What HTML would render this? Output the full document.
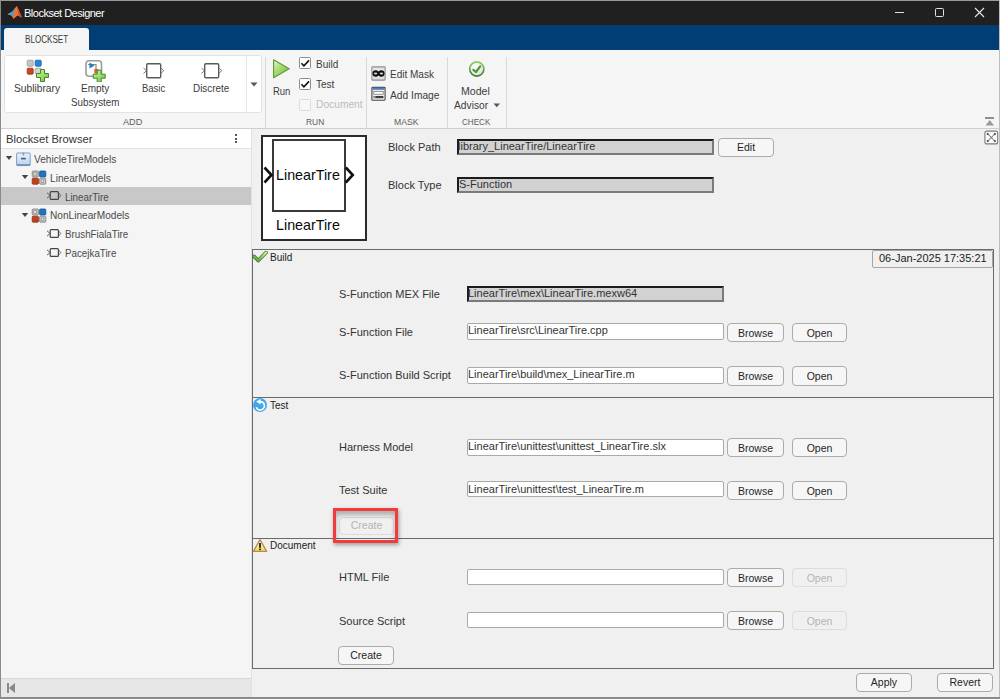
<!DOCTYPE html>
<html><head><meta charset="utf-8">
<style>
*{box-sizing:border-box;margin:0;padding:0}
html,body{width:1000px;height:699px;overflow:hidden;background:#f0f0f0;font-family:"Liberation Sans",sans-serif;}
.a{position:absolute}
.t{position:absolute;white-space:nowrap;color:#333;}
.ft{color:#3a3a3a}
.fld{position:absolute;background:#fff;border:1px solid #a9a9a9;border-radius:2px;}
.dfld{position:absolute;background:#d2d2d2;border-style:solid;border-width:2px;border-color:#1c1c1c #7a7a7a #7a7a7a #1c1c1c;}
.btn{position:absolute;background:#f6f6f6;border:1px solid #ababab;border-radius:4px;color:#262626;font-size:10.5px;text-align:center;}
.btn.dis{color:#b4b4b4;border-color:#dcdcdc;background:#f0f0f0}
.ts{position:absolute;white-space:nowrap;color:#3c3c3c;transform-origin:0 0;}
.vsep{position:absolute;width:1px;background:#d9d9d9;top:57px;height:71px}
</style></head>
<body>
<!-- title bar -->
<div class="a" style="left:0;top:0;width:1000px;height:25px;background:#202020"></div>
<svg class="a" style="left:6px;top:5px" width="17" height="15" viewBox="0 0 17 15">
  <path d="M1.5 9.2 L6.2 6.8 L9.5 2.5 L11 1 L14.5 9 L16 12.5 L11.5 10.5 L7.5 14 L5.5 10.5 Z" fill="#e8762c"/>
  <path d="M1.5 9.2 L6.2 6.8 L9.5 2.5 L7 10.5 L5.5 10.5 Z" fill="#3fa2dc"/>
  <path d="M11 1 L14.5 9 L16 12.5 L12.5 10 Z" fill="#d4442a"/>
</svg>
<div class="t" style="left:24px;top:8px;font-size:11px;line-height:11px;color:#fff;letter-spacing:-0.5px">Blockset Designer</div>
<div class="a" style="left:895px;top:12px;width:9px;height:1px;background:#e0e0e0"></div>
<div class="a" style="left:935px;top:8px;width:9px;height:9px;border:1px solid #e0e0e0;border-radius:1.5px"></div>
<svg class="a" style="left:974px;top:7px" width="11" height="11" viewBox="0 0 11 11"><path d="M1 1 L10 10 M10 1 L1 10" stroke="#e6e6e6" stroke-width="1.1"/></svg>

<!-- blue band -->
<div class="a" style="left:0;top:25px;width:1000px;height:25px;background:#003e74"></div>
<div class="a" style="left:4px;top:28px;width:85px;height:22px;background:#f5f5f5;border-radius:3px 3px 0 0"></div>
<div class="ts" style="left:25px;top:34px;font-size:10.5px;line-height:10px;color:#3a3a3a;transform:scaleX(0.77)">BLOCKSET</div>

<!-- toolstrip -->
<div class="a" style="left:0;top:50px;width:1000px;height:78px;background:#f5f5f5"></div>
<div class="a" style="left:4px;top:55px;width:258px;height:58px;background:#fff;border:1px solid #e3e3e3;border-radius:3px"></div>
<div class="a" style="left:246px;top:56px;width:1px;height:56px;background:#e6e6e6"></div>
<svg class="a" style="left:250px;top:82px" width="8" height="5"><path d="M0.5 0.5 L7.5 0.5 L4 4.5 Z" fill="#555"/></svg>

<div class="vsep" style="left:265px"></div>
<div class="vsep" style="left:366px"></div>
<div class="vsep" style="left:447px"></div>
<div class="vsep" style="left:506px"></div>
<div class="a" style="left:0;top:128px;width:1000px;height:1px;background:#cfcfcf"></div>

<!-- gallery items -->
<svg class="a" style="left:26px;top:59px" width="24" height="23" viewBox="0 0 24 23">
  <defs><linearGradient id="gp" x1="0" y1="0" x2="1" y2="1"><stop offset="0" stop-color="#d6f5a8"/><stop offset="1" stop-color="#6fc13a"/></linearGradient></defs>
  <rect x="1.2" y="1.2" width="6" height="6" rx="1" fill="#c4c4c4" stroke="#9a9a9a" stroke-width="0.8"/>
  <rect x="9.2" y="1.2" width="6" height="6" rx="1" fill="#2b86cf" stroke="#1a5e9c" stroke-width="0.8"/>
  <rect x="1.2" y="9.2" width="6" height="6" rx="1" fill="#c9461f" stroke="#9a3010" stroke-width="0.8"/>
  <rect x="9.2" y="9.2" width="6" height="6" rx="1" fill="#d4d4d4" stroke="#9a9a9a" stroke-width="0.8"/>
  <path d="M14.5 10.5 h4 v4 h4 v4 h-4 v4 h-4 v-4 h-4 v-4 h4 z" fill="url(#gp)" stroke="#3e8a2a" stroke-width="1"/>
</svg>
<div class="ts" style="left:14px;top:83px;font-size:11px;line-height:11px;transform:scaleX(0.93)">Sublibrary</div>

<svg class="a" style="left:84px;top:59px" width="24" height="23" viewBox="0 0 24 23">
  <rect x="2" y="1.8" width="15.5" height="15.5" rx="3" fill="#fdfdfd" stroke="#9c9c9c" stroke-width="1.6"/>
  <path d="M4 5.5 H12 V10" stroke="#888" stroke-width="1.2" fill="none"/>
  <path d="M5.5 3.5 L10.5 6.5 L5.5 9.5 Z" fill="#1f7ac2"/>
  <rect x="10.3" y="10" width="4.2" height="4.5" fill="#e0622a"/>
  <path d="M13.2 11.2 h4 v4 h4 v4 h-4 v4 h-4 v-4 h-4 v-4 h4 z" fill="url(#gp)" stroke="#3e8a2a" stroke-width="1"/>
</svg>
<div class="ts" style="left:81px;top:83px;font-size:11px;line-height:11px;transform:scaleX(0.91)">Empty</div>
<div class="ts" style="left:71px;top:97px;font-size:11px;line-height:11px;transform:scaleX(0.89)">Subsystem</div>

<svg class="a" style="left:142px;top:62px" width="24" height="17" viewBox="0 0 24 17">
  <rect x="4.7" y="1.7" width="14" height="14" rx="1.2" fill="#fff" stroke="#5a5a5a" stroke-width="1.4"/>
  <path d="M1.5 6 L4.5 8.7 L1.5 11.4" stroke="#666" stroke-width="0.9" fill="none"/>
  <path d="M19.2 6.2 L21.8 8.7 L19.2 11.2" stroke="#666" stroke-width="0.9" fill="none"/>
</svg>
<div class="ts" style="left:142px;top:83px;font-size:11px;line-height:11px;transform:scaleX(0.86)">Basic</div>
<svg class="a" style="left:200px;top:62px" width="24" height="17" viewBox="0 0 24 17">
  <rect x="4.7" y="1.7" width="14" height="14" rx="1.2" fill="#fff" stroke="#5a5a5a" stroke-width="1.4"/>
  <path d="M1.5 6 L4.5 8.7 L1.5 11.4" stroke="#666" stroke-width="0.9" fill="none"/>
  <path d="M19.2 6.2 L21.8 8.7 L19.2 11.2" stroke="#666" stroke-width="0.9" fill="none"/>
</svg>
<div class="ts" style="left:193px;top:83px;font-size:11px;line-height:11px;transform:scaleX(0.9)">Discrete</div>
<div class="ts" style="left:123px;top:117px;font-size:9.5px;line-height:9.5px;color:#5c5c5c;transform:scaleX(0.96)">ADD</div>

<!-- run -->
<svg class="a" style="left:272px;top:58px" width="19" height="22" viewBox="0 0 19 22">
  <defs><linearGradient id="gr" x1="0" y1="0" x2="1" y2="1"><stop offset="0" stop-color="#eefbd8"/><stop offset="0.35" stop-color="#b2e07a"/><stop offset="1" stop-color="#6cb43a"/></linearGradient></defs>
  <path d="M1.6 1.8 L17.2 10.8 L1.6 19.8 Z" fill="url(#gr)" stroke="#5e9e3e" stroke-width="1.2" stroke-linejoin="round"/>
</svg>
<div class="ts" style="left:272.5px;top:86px;font-size:11px;line-height:11px;transform:scaleX(0.86)">Run</div>
<div class="a" style="left:299px;top:57px;width:12px;height:12px;border:1px solid #8c8c8c;border-radius:1.5px;background:#fff"></div>
<svg class="a" style="left:299px;top:57px" width="12" height="12"><path d="M2.4 6.2 L4.9 8.8 L10 3.4" stroke="#111" stroke-width="1.6" fill="none"/></svg>
<div class="a" style="left:299px;top:78px;width:12px;height:12px;border:1px solid #8c8c8c;border-radius:1.5px;background:#fff"></div>
<svg class="a" style="left:299px;top:78px" width="12" height="12"><path d="M2.4 6.2 L4.9 8.8 L10 3.4" stroke="#111" stroke-width="1.6" fill="none"/></svg>
<div class="a" style="left:299px;top:99px;width:12px;height:12px;border:1px solid #dcdcdc;border-radius:1.5px;background:#f7f7f7"></div>
<div class="ts" style="left:316px;top:59px;font-size:11px;line-height:11px;transform:scaleX(0.91)">Build</div>
<div class="ts" style="left:316px;top:79px;font-size:11px;line-height:11px;transform:scaleX(0.91)">Test</div>
<div class="ts" style="left:316px;top:99px;font-size:11px;line-height:11px;transform:scaleX(0.93);color:#bdbdbd">Document</div>
<div class="ts" style="left:306px;top:117px;font-size:9.5px;line-height:9.5px;color:#5c5c5c;transform:scaleX(0.89)">RUN</div>

<!-- mask -->
<svg class="a" style="left:371px;top:66px" width="15" height="15" viewBox="0 0 15 15">
  <defs><linearGradient id="gm" x1="0" y1="0" x2="0" y2="1"><stop offset="0" stop-color="#dedede"/><stop offset="0.5" stop-color="#f2f2f2"/><stop offset="1" stop-color="#d6d6d6"/></linearGradient></defs>
  <rect x="0.9" y="0.9" width="13.2" height="13.2" rx="0.8" fill="url(#gm)" stroke="#8e8e8e" stroke-width="1.1"/>
  <path d="M1.4 7.4 C1.4 3.6 5.6 3.4 7.5 5.6 C9.4 3.4 13.6 3.6 13.6 7.4 C13.6 11.2 9.4 11.4 7.5 9.4 C5.6 11.4 1.4 11.2 1.4 7.4 Z" fill="#111"/>
  <ellipse cx="4.6" cy="7.5" rx="1.7" ry="1.1" fill="#d4d4d4"/>
  <ellipse cx="10.4" cy="7.5" rx="1.7" ry="1.1" fill="#d4d4d4"/>
</svg>
<svg class="a" style="left:371px;top:86px" width="15" height="15" viewBox="0 0 15 15">
  <rect x="0.9" y="1.4" width="13.2" height="12.8" rx="0.6" fill="#ececec" stroke="#4a4a4a" stroke-width="1.1"/>
  <rect x="1.4" y="1.6" width="12.2" height="2.2" fill="#4f7fb8"/>
  <rect x="2.8" y="5.6" width="9.4" height="2.6" fill="#fff" stroke="#6a6a6a" stroke-width="0.7"/>
  <rect x="2.6" y="10" width="9.8" height="2.2" fill="#3c3c3c"/>
  <rect x="3" y="10.4" width="1.6" height="1.4" fill="#bbb"/>
</svg>
<div class="ts" style="left:390px;top:69px;font-size:11px;line-height:11px;transform:scaleX(0.91)">Edit Mask</div>
<div class="ts" style="left:390px;top:90px;font-size:11px;line-height:11px;transform:scaleX(0.93)">Add Image</div>
<div class="ts" style="left:394px;top:117px;font-size:9.5px;line-height:9.5px;color:#5c5c5c;transform:scaleX(0.91)">MASK</div>

<!-- check -->
<svg class="a" style="left:468px;top:60px" width="18" height="18" viewBox="0 0 18 18">
  <defs><radialGradient id="gc" cx="0.4" cy="0.35" r="0.7"><stop offset="0" stop-color="#ffffff"/><stop offset="1" stop-color="#dcdcdc"/></radialGradient></defs>
  <linearGradient id="gcr" x1="0" y1="0" x2="0" y2="1"><stop offset="0" stop-color="#8fd05e"/><stop offset="1" stop-color="#3c7e2c"/></linearGradient>
  <circle cx="8.8" cy="9" r="7.1" fill="url(#gc)" stroke="url(#gcr)" stroke-width="1.7"/>
  <path d="M5.4 9.8 L7.9 12 L12.2 6.4" stroke="#4b9a30" stroke-width="2.2" fill="none" stroke-linecap="round" stroke-linejoin="round"/>
</svg>
<div class="ts" style="left:461px;top:86px;font-size:11px;line-height:11px;transform:scaleX(0.96)">Model</div>
<div class="ts" style="left:454px;top:100px;font-size:11px;line-height:11px;transform:scaleX(0.93)">Advisor</div>
<svg class="a" style="left:493px;top:103px" width="8" height="5"><path d="M0.5 0.5 L7 0.5 L3.75 4.2 Z" fill="#555"/></svg>
<div class="ts" style="left:462px;top:117px;font-size:9.5px;line-height:9.5px;color:#5c5c5c;transform:scaleX(0.85)">CHECK</div>

<!-- collapse icon -->
<div class="a" style="left:985px;top:117px;width:9px;height:1.5px;background:#8f8f8f"></div>
<svg class="a" style="left:985px;top:119px" width="10" height="7"><path d="M0.5 6.5 L4.7 1 L9 6.5 Z" fill="#9a9a9a"/></svg>


<!-- left panel -->
<div class="a" style="left:1px;top:129px;width:250px;height:19px;background:#fff"></div>
<div class="a" style="left:1px;top:148px;width:250px;height:1px;background:#e0e0e0"></div>
<div class="a" style="left:1px;top:149px;width:250px;height:529px;background:#f5f5f5"></div>
<div class="a" style="left:1px;top:678px;width:250px;height:20px;background:#e6e6e6;border-top:1px solid #d6d6d6"></div>
<div class="a" style="left:251px;top:129px;width:1px;height:570px;background:#e2e2e2"></div>
<div class="t" style="left:6px;top:134px;font-size:11.2px;line-height:11px;color:#333">Blockset Browser</div>
<div class="a" style="left:235px;top:134px;width:2px;height:2px;background:#555"></div>
<div class="a" style="left:235px;top:137.5px;width:2px;height:2px;background:#555"></div>
<div class="a" style="left:235px;top:141px;width:2px;height:2px;background:#555"></div>
<div class="a" style="left:1px;top:187px;width:250px;height:18px;background:#c8c8c8"></div>


<!-- tree -->
<svg class="a" style="left:5px;top:155px" width="8" height="6"><path d="M0.8 1 L7.2 1 L4 5 Z" fill="#454545"/></svg>
<svg class="a" style="left:15px;top:151px" width="17" height="16" viewBox="0 0 17 16">
  <defs><linearGradient id="gb" x1="0" y1="0" x2="0" y2="1"><stop offset="0" stop-color="#e8f2fb"/><stop offset="1" stop-color="#b9d3ec"/></linearGradient></defs>
  <rect x="1.6" y="2" width="13.6" height="12.6" rx="1" fill="url(#gb)" stroke="#7d9cc4" stroke-width="1"/>
  <path d="M1.6 13.9 H15.2" stroke="#5f83b3" stroke-width="1.2"/>
  <rect x="7.6" y="1.5" width="1.6" height="3" fill="#7f9fc6"/>
  <rect x="6" y="6.8" width="4.8" height="1.6" fill="#445a78"/>
</svg>
<div class="ts" style="left:34px;top:154px;font-size:11px;line-height:11px;transform:scaleX(0.92);color:#4a4a4a">VehicleTireModels</div>

<svg class="a" style="left:21px;top:174px" width="8" height="6"><path d="M0.8 1 L7.2 1 L4 5 Z" fill="#454545"/></svg>
<svg class="a" style="left:31px;top:170px" width="16" height="15" viewBox="0 0 16 15">
  <rect x="1.2" y="1" width="6.2" height="6" rx="0.9" fill="#bdbdbd" stroke="#7d7d7d" stroke-width="0.8"/>
  <rect x="2.8" y="2.8" width="2.6" height="2.2" fill="#f0f0f0" stroke="#777" stroke-width="0.5"/>
  <rect x="8.6" y="1" width="6.2" height="6" rx="0.9" fill="#1f74c0" stroke="#15578f" stroke-width="0.8"/>
  <rect x="1.2" y="8.2" width="6.2" height="6" rx="0.9" fill="#c2401b" stroke="#8e2c10" stroke-width="0.8"/>
  <rect x="8.6" y="8.2" width="6.2" height="6" rx="0.9" fill="#c4c4c4" stroke="#7d7d7d" stroke-width="0.8"/>
  <rect x="10.2" y="10" width="2.6" height="2.2" fill="#f0f0f0" stroke="#777" stroke-width="0.5"/>
</svg>
<div class="ts" style="left:50px;top:173px;font-size:11px;line-height:11px;transform:scaleX(0.92);color:#4a4a4a">LinearModels</div>

<svg class="a" style="left:46px;top:190px" width="16" height="11" viewBox="0 0 16 11">
  <rect x="4.2" y="1.6" width="8.2" height="7.8" rx="1" fill="none" stroke="#444" stroke-width="1.2"/>
  <path d="M1 2.8 L4 5.5 L1 8.2" stroke="#555" stroke-width="0.9" fill="none"/>
  <path d="M12.6 3 L14.8 5.5 L12.6 8" stroke="#555" stroke-width="0.9" fill="none"/>
</svg>
<div class="ts" style="left:65px;top:192px;font-size:11px;line-height:11px;transform:scaleX(0.89);color:#4a4a4a">LinearTire</div>

<svg class="a" style="left:21px;top:212px" width="8" height="6"><path d="M0.8 1 L7.2 1 L4 5 Z" fill="#454545"/></svg>
<svg class="a" style="left:31px;top:208px" width="16" height="15" viewBox="0 0 16 15">
  <rect x="1.2" y="1" width="6.2" height="6" rx="0.9" fill="#bdbdbd" stroke="#7d7d7d" stroke-width="0.8"/>
  <rect x="2.8" y="2.8" width="2.6" height="2.2" fill="#f0f0f0" stroke="#777" stroke-width="0.5"/>
  <rect x="8.6" y="1" width="6.2" height="6" rx="0.9" fill="#1f74c0" stroke="#15578f" stroke-width="0.8"/>
  <rect x="1.2" y="8.2" width="6.2" height="6" rx="0.9" fill="#c2401b" stroke="#8e2c10" stroke-width="0.8"/>
  <rect x="8.6" y="8.2" width="6.2" height="6" rx="0.9" fill="#c4c4c4" stroke="#7d7d7d" stroke-width="0.8"/>
  <rect x="10.2" y="10" width="2.6" height="2.2" fill="#f0f0f0" stroke="#777" stroke-width="0.5"/>
</svg>
<div class="ts" style="left:50px;top:210px;font-size:11px;line-height:11px;transform:scaleX(0.92);color:#4a4a4a">NonLinearModels</div>

<svg class="a" style="left:46px;top:228px" width="16" height="11" viewBox="0 0 16 11">
  <rect x="4.2" y="1.6" width="8.2" height="7.8" rx="1" fill="none" stroke="#444" stroke-width="1.2"/>
  <path d="M1 2.8 L4 5.5 L1 8.2" stroke="#555" stroke-width="0.9" fill="none"/>
  <path d="M12.6 3 L14.8 5.5 L12.6 8" stroke="#555" stroke-width="0.9" fill="none"/>
</svg>
<div class="ts" style="left:65px;top:229px;font-size:11px;line-height:11px;transform:scaleX(0.89);color:#4a4a4a">BrushFialaTire</div>

<svg class="a" style="left:46px;top:247px" width="16" height="11" viewBox="0 0 16 11">
  <rect x="4.2" y="1.6" width="8.2" height="7.8" rx="1" fill="none" stroke="#444" stroke-width="1.2"/>
  <path d="M1 2.8 L4 5.5 L1 8.2" stroke="#555" stroke-width="0.9" fill="none"/>
  <path d="M12.6 3 L14.8 5.5 L12.6 8" stroke="#555" stroke-width="0.9" fill="none"/>
</svg>
<div class="ts" style="left:65px;top:248px;font-size:11px;line-height:11px;transform:scaleX(0.89);color:#4a4a4a">PacejkaTire</div>

<!-- scroll |< icon -->
<div class="a" style="left:7px;top:683px;width:1.5px;height:10px;background:#8a8a8a"></div>
<svg class="a" style="left:8px;top:683px" width="8" height="11"><path d="M7 0 L0.8 5 L7 10 Z" fill="#8a8a8a"/></svg>

<!-- right panel top -->
<div class="a" style="left:261px;top:135px;width:106px;height:106px;background:#fff;border:2px solid #2a2a2a"></div>
<div class="a" style="left:271.5px;top:138.5px;width:74px;height:73.5px;border:2px solid #3a3a3a"></div>
<div class="t" style="left:276px;top:168px;font-size:14.3px;line-height:14px;color:#0a0a0a">LinearTire</div>
<div class="t" style="left:276px;top:218px;font-size:14.3px;line-height:14px;color:#0a0a0a">LinearTire</div>
<svg class="a" style="left:262px;top:165px" width="95" height="20"><path d="M2.5 2.5 L9.5 10 L2.5 17.5 M83.8 2.5 L90.8 10 L83.8 17.5" stroke="#111" stroke-width="2.6" fill="none"/></svg>

<div class="t" style="left:388px;top:142px;font-size:11px;line-height:11px">Block Path</div>
<div class="t" style="left:388px;top:180px;font-size:11px;line-height:11px">Block Type</div>
<div class="dfld" style="left:457px;top:139px;width:257px;height:16px"></div>
<div class="t" style="left:458px;top:141px;font-size:11px;line-height:11px">library_LinearTire/LinearTire</div>
<div class="dfld" style="left:457px;top:177px;width:257px;height:16px"></div>
<div class="t" style="left:459px;top:179px;font-size:11px;line-height:11px">S-Function</div>
<div class="btn" style="left:718px;top:138px;width:56px;height:19px;line-height:17px">Edit</div>

<!-- panels -->
<div class="a" style="left:252px;top:249px;width:742px;height:420px;border:1px solid #6a6a6a"></div>
<div class="a" style="left:253px;top:397px;width:740px;height:1px;background:#6a6a6a"></div>
<div class="a" style="left:253px;top:538px;width:740px;height:1px;background:#6a6a6a"></div>


<!-- panel header icons -->
<svg class="a" style="left:252px;top:250px" width="16" height="13" viewBox="0 0 16 13">
  <defs><linearGradient id="gk" x1="0" y1="1" x2="1" y2="0"><stop offset="0" stop-color="#4fa02e"/><stop offset="1" stop-color="#d0f59a"/></linearGradient></defs>
  <path d="M2.2 6.4 L6.2 10.6 L14 2.6" stroke="#3d6e2c" stroke-width="3.6" fill="none" stroke-linejoin="round" stroke-linecap="round"/>
  <path d="M2.2 6.4 L6.2 10.6 L14 2.6" stroke="url(#gk)" stroke-width="2.2" fill="none" stroke-linejoin="round" stroke-linecap="round"/>
</svg>
<svg class="a" style="left:252px;top:397px" width="16" height="16" viewBox="0 0 16 16">
  <circle cx="8" cy="8" r="7" fill="#40a6ee"/>
  <path d="M4.3 10.2 A4.2 4.2 0 1 0 7.6 4.6" stroke="#fff" stroke-width="1.7" fill="none"/>
  <path d="M4.2 4.6 L8.8 1.9 L8.6 7.4 Z" fill="#fff"/>
</svg>
<svg class="a" style="left:252px;top:538px" width="16" height="15" viewBox="0 0 16 15">
  <defs><linearGradient id="gw" x1="0" y1="0" x2="0" y2="1"><stop offset="0" stop-color="#fffbe8"/><stop offset="0.45" stop-color="#f7f0b0"/><stop offset="1" stop-color="#f0e030"/></linearGradient></defs>
  <path d="M8 1.6 L14.6 13.4 L1.4 13.4 Z" fill="url(#gw)" stroke="#b98a55" stroke-width="1.3" stroke-linejoin="round"/>
  <rect x="7.1" y="5" width="1.8" height="4.8" fill="#222"/>
  <rect x="7.1" y="10.6" width="1.8" height="1.6" fill="#222"/>
</svg>
<!-- maximize icon -->
<svg class="a" style="left:984px;top:130px" width="15" height="15" viewBox="0 0 15 15">
  <rect x="0.9" y="1.1" width="12.8" height="12.8" rx="2" fill="#f6f6f6" stroke="#7c7c7c" stroke-width="1.1"/>
  <path d="M3.7 3.9 L10.9 11.1 M10.9 3.9 L3.7 11.1" stroke="#8a8a8a" stroke-width="1.3"/>
  <path d="M7.3 3.2 L8.8 4.8 L7.3 6.2 L5.8 4.8 Z" fill="#fff"/>
  <path d="M7.3 8.8 L8.8 10.3 L7.3 11.8 L5.8 10.3 Z" fill="#fff"/>
  <ellipse cx="4.3" cy="7.5" rx="1.2" ry="1.9" fill="#fff"/>
  <ellipse cx="10.3" cy="7.5" rx="1.2" ry="1.9" fill="#fff"/>
  <circle cx="3.7" cy="3.9" r="0.95" fill="#333"/><circle cx="10.9" cy="3.9" r="0.95" fill="#333"/>
  <circle cx="3.7" cy="11.1" r="0.95" fill="#333"/><circle cx="10.9" cy="11.1" r="0.95" fill="#333"/>
</svg>

<!-- build -->
<div class="t" style="left:270px;top:253px;font-size:10px;line-height:10px;color:#222">Build</div>
<div class="a" style="left:872px;top:250px;width:121px;height:18px;border:1px solid #a5a5a5;border-radius:2px;background:#f0f0f0"></div>
<div class="t" style="left:879px;top:253px;font-size:11px;line-height:11px;color:#222">06-Jan-2025 17:35:21</div>
<div class="t" style="left:339px;top:289px;font-size:11px;line-height:11px">S-Function MEX File</div>
<div class="t" style="left:339px;top:327px;font-size:11px;line-height:11px">S-Function File</div>
<div class="t" style="left:339px;top:370px;font-size:11px;line-height:11px">S-Function Build Script</div>
<div class="dfld" style="left:467px;top:286px;width:257px;height:16px"></div>
<div class="t" style="left:468px;top:288px;font-size:11px;line-height:11px">LinearTire\mex\LinearTire.mexw64</div>
<div class="fld" style="left:467px;top:323px;width:257px;height:17px"></div>
<div class="t" style="left:468px;top:325px;font-size:11px;line-height:11px">LinearTire\src\LinearTire.cpp</div>
<div class="btn" style="left:727px;top:323px;width:57px;height:19px;line-height:18px">Browse</div>
<div class="btn" style="left:792px;top:323px;width:55px;height:19px;line-height:18px">Open</div>
<div class="fld" style="left:467px;top:367px;width:257px;height:17px"></div>
<div class="t" style="left:468px;top:369px;font-size:11px;line-height:11px">LinearTire\build\mex_LinearTire.m</div>
<div class="btn" style="left:727px;top:366px;width:57px;height:20px;line-height:18px">Browse</div>
<div class="btn" style="left:792px;top:366px;width:55px;height:20px;line-height:18px">Open</div>

<!-- test -->
<div class="t" style="left:270px;top:401px;font-size:10px;line-height:10px;color:#222">Test</div>
<div class="t" style="left:339px;top:442px;font-size:11px;line-height:11px">Harness Model</div>
<div class="t" style="left:339px;top:485px;font-size:11px;line-height:11px">Test Suite</div>
<div class="fld" style="left:467px;top:439px;width:257px;height:17px"></div>
<div class="t" style="left:468px;top:441px;font-size:11px;line-height:11px">LinearTire\unittest\unittest_LinearTire.slx</div>
<div class="btn" style="left:727px;top:438px;width:57px;height:19px;line-height:18px">Browse</div>
<div class="btn" style="left:792px;top:438px;width:55px;height:19px;line-height:18px">Open</div>
<div class="fld" style="left:467px;top:481px;width:257px;height:16px"></div>
<div class="t" style="left:468px;top:484px;font-size:11px;line-height:11px">LinearTire\unittest\test_LinearTire.m</div>
<div class="btn" style="left:727px;top:481px;width:57px;height:19px;line-height:18px">Browse</div>
<div class="btn" style="left:792px;top:481px;width:55px;height:19px;line-height:18px">Open</div>

<!-- document -->
<div class="t" style="left:270px;top:541px;font-size:10px;line-height:10px;color:#222">Document</div>
<div class="t" style="left:339px;top:572px;font-size:11px;line-height:11px">HTML File</div>
<div class="t" style="left:339px;top:616px;font-size:11px;line-height:11px">Source Script</div>
<div class="fld" style="left:467px;top:569px;width:257px;height:16px"></div>
<div class="btn" style="left:727px;top:568px;width:57px;height:19px;line-height:18px">Browse</div>
<div class="btn dis" style="left:792px;top:568px;width:55px;height:19px;line-height:18px">Open</div>
<div class="fld" style="left:467px;top:612px;width:257px;height:16px"></div>
<div class="btn" style="left:727px;top:611px;width:57px;height:19px;line-height:18px">Browse</div>
<div class="btn dis" style="left:792px;top:611px;width:55px;height:19px;line-height:18px">Open</div>
<div class="btn" style="left:338px;top:646px;width:56px;height:19px;line-height:17px">Create</div>

<div class="btn" style="left:856px;top:673px;width:56px;height:19px;line-height:17px">Apply</div>
<div class="btn" style="left:937px;top:673px;width:56px;height:19px;line-height:17px">Revert</div>

<!-- highlighted create -->
<div class="btn dis" style="left:339px;top:517px;width:55px;height:18px;line-height:15px">Create</div>
<div class="a" style="left:333px;top:508px;width:65px;height:35px;border:3px solid #f03c3c;box-shadow:1px 2px 4px rgba(0,0,0,0.35), inset 0 4px 5px rgba(0,0,0,0.28)"></div>

<!-- window frame -->
<div class="a" style="left:0;top:0;width:1000px;height:1px;background:#9a9a9a"></div>
<div class="a" style="left:0;top:0;width:1px;height:699px;background:#8a8a8a"></div>
<div class="a" style="left:999px;top:0;width:1px;height:699px;background:#bdbdbd"></div>
<div class="a" style="left:0;top:697px;width:1000px;height:2px;background:#8a8a8a"></div>
</body></html>
